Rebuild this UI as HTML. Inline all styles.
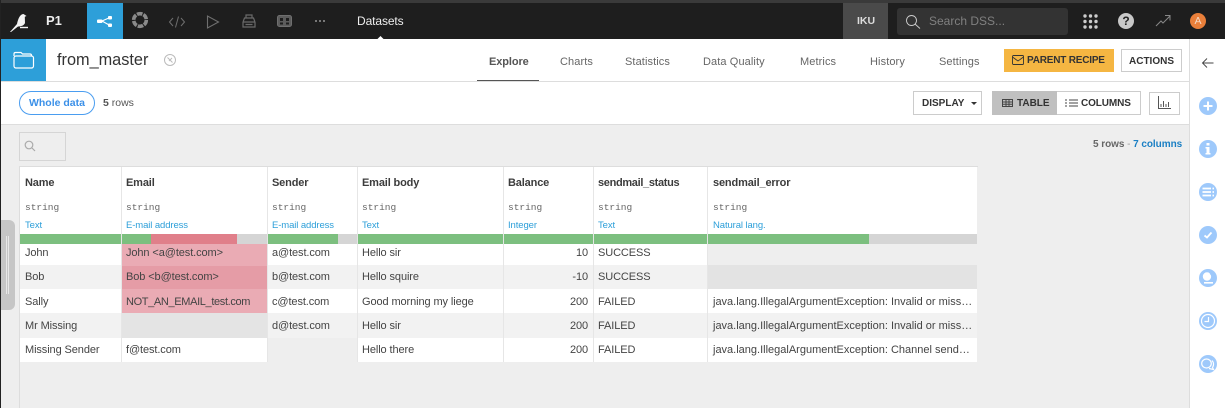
<!DOCTYPE html>
<html><head><meta charset="utf-8">
<style>
html,body{margin:0;padding:0;width:1225px;height:408px;overflow:hidden;background:#fff;font-family:"Liberation Sans",sans-serif;color:#333}
.a{position:absolute;white-space:nowrap}
svg{position:absolute;overflow:visible}
.t{font-size:11px;line-height:14px;letter-spacing:-.1px;color:#444}
.tab{font-size:11px;line-height:14px;top:55px;color:#666;letter-spacing:.1px}
.h{font-size:11px;font-weight:bold;top:177px;color:#3c3c3c;line-height:13px;letter-spacing:-.15px}
.m{font-family:"Liberation Mono",monospace;font-size:9.5px;top:202px;color:#666;line-height:12px}
.l{font-size:9.5px;top:220px;color:#2d9fd9;line-height:12px;letter-spacing:-.1px}
.btn{font-size:10px;font-weight:bold;color:#333;line-height:12px}
</style></head><body>
<div class="a" style="left:0;top:0;width:1225px;height:3px;background:#3a3a3a"></div>
<div class="a" style="left:0;top:3px;width:1225px;height:36px;background:#1e1e1e"></div>
<div class="a" style="left:0;top:0;width:1px;height:408px;background:#222"></div>
<svg style="left:9px;top:13px" width="20" height="20" viewBox="0 0 20 20"><path d="M1 19 L8 11 C9 6 11 1 14.500 1 L17.500 3 L15.800 3.800 L16 10 C15 12.500 12 13.500 9 13.500 L2 19Z" fill="#f4f4f4"/><rect x="11" y="13.800" width="8" height="1.400" fill="#f4f4f4"/></svg>
<div class="a" style="left:46px;top:13px;font-size:13px;font-weight:bold;color:#eee;line-height:15px">P1</div>
<div class="a" style="left:87px;top:3px;width:36px;height:36px;background:#2d9fd9"></div>
<svg style="left:97px;top:14px" width="16" height="16" viewBox="0 0 16 16"><path d="M5 7 L13 3.500 M5 7 L13 11.500" stroke="#fff" stroke-width="1.100" fill="none"/><rect x="0" y="5.500" width="5.500" height="3.500" rx="1" fill="#fff"/><rect x="11" y="2" width="4" height="3.500" rx="1" fill="#fff"/><rect x="11" y="9.500" width="4" height="3.500" rx="1" fill="#fff"/></svg>
<svg style="left:131px;top:12px" width="18" height="18" viewBox="0 0 18 18"><circle cx="9" cy="8" r="6.300" fill="none" stroke="#8a8a8a" stroke-width="3.600" stroke-dasharray="5.500 1.100"/></svg>
<svg style="left:169px;top:15px" width="16" height="14" viewBox="0 0 16 14" fill="none" stroke="#6f6f6f" stroke-width="1"><path d="M4 3 L0.500 7 L4 11 M12 3 L15.500 7 L12 11 M9.500 1.500 L6.500 12.500"/></svg>
<svg style="left:206px;top:14px" width="14" height="16" viewBox="0 0 14 16" fill="none" stroke="#6f6f6f" stroke-width="1.100"><path d="M1.500 2 L1.500 14 L12.500 8Z"/></svg>
<svg style="left:242px;top:13px" width="14" height="16" viewBox="0 0 14 16" fill="none" stroke="#6a6a6a" stroke-width="1.200"><path d="M4 5 V2 H10 V5 M1 9 L2.500 5 H11.500 L13 9 M1 9 H13 M1 9 V14 H13 V9 M3.500 11.500 H10.500" /></svg>
<svg style="left:277px;top:15px" width="15" height="13" viewBox="0 0 15 13"><rect x=".5" y=".5" width="14" height="11" rx="2" fill="#5c5c5c" stroke="#6f6f6f"/><rect x="3" y="3" width="3" height="3" fill="#1e1e1e"/><rect x="9" y="3" width="3" height="3" fill="#1e1e1e"/><rect x="3" y="7.500" width="3" height="2" fill="#1e1e1e"/><rect x="9" y="7.500" width="3" height="2" fill="#1e1e1e"/></svg>
<div class="a" style="left:315px;top:20px;width:2px;height:2px;background:#777;box-shadow:4px 0 #777,8px 0 #777"></div>
<div class="a" style="left:357px;top:14px;font-size:12px;color:#eee;line-height:14px;letter-spacing:-.1px">Datasets</div>
<div class="a" style="left:378px;top:37px;width:5px;height:5px;background:#fff;transform:rotate(45deg)"></div>

<div class="a" style="left:843px;top:3px;width:45px;height:36px;background:#4a4a4a"></div>
<div class="a" style="left:857px;top:15px;font-size:10.500px;font-weight:bold;color:#ddd;line-height:13px">IKU</div>
<div class="a" style="left:897px;top:8px;width:171px;height:27px;background:#333;border-radius:3px"></div>
<svg style="left:905px;top:14px" width="16" height="16" viewBox="0 0 16 16" fill="none" stroke="#ccc" stroke-width=".9"><circle cx="6.500" cy="6.500" r="5"/><path d="M10 10 L15 14.500"/></svg>
<div class="a" style="left:929px;top:14px;font-size:12px;color:#808080;line-height:14px">Search DSS...</div>
<svg style="left:1083px;top:14px" width="15" height="15" viewBox="0 0 15 15" fill="#ccc"><circle cx="2" cy="2" r="1.700"/><circle cx="7.500" cy="2" r="1.700"/><circle cx="13" cy="2" r="1.700"/><circle cx="2" cy="7.500" r="1.700"/><circle cx="7.500" cy="7.500" r="1.700"/><circle cx="13" cy="7.500" r="1.700"/><circle cx="2" cy="13" r="1.700"/><circle cx="7.500" cy="13" r="1.700"/><circle cx="13" cy="13" r="1.700"/></svg>
<div class="a" style="left:1118px;top:13px;width:16px;height:16px;border-radius:50%;background:#c8c8c8;color:#222;font-size:12px;font-weight:bold;line-height:16px;text-align:center">?</div>
<svg style="left:1155px;top:14px" width="16" height="14" viewBox="0 0 16 14" fill="none" stroke="#888" stroke-width="1"><path d="M1 12 L6 7 L8 9 L15 2 M10 1.500 H15 V6.500"/></svg>
<div class="a" style="left:1190px;top:13px;width:16px;height:16px;border-radius:50%;background:#e97f3a;color:#f6d9c4;font-size:10.500px;line-height:16px;text-align:center">A</div>

<div class="a" style="left:1px;top:39px;width:45px;height:42px;background:#2d9fd9"></div>
<svg style="left:13px;top:51px" width="22" height="18" viewBox="0 0 22 18" fill="none" stroke="#fff" stroke-width="1.200"><path d="M1 5 V3 C1 2 1.500 1.500 2.500 1.500 H8 L9.500 3 H17 C18 3 18.500 3.500 18.500 4.500"/><rect x="1" y="5" width="19.500" height="12" rx="2"/></svg>
<div class="a" style="left:57px;top:51px;font-size:16.300px;line-height:19px;color:#333">from_master</div>
<svg style="left:164px;top:54px" width="12" height="12" viewBox="0 0 12 12" fill="none" stroke="#bbb" stroke-width="1"><circle cx="6" cy="6" r="5.500"/><path d="M3.500 3.500 L8.500 8.500 M5 7 L8 4"/></svg>

<div class="a tab" style="left:489px;font-weight:bold;color:#555;letter-spacing:-.1px">Explore</div>
<div class="a" style="left:477px;top:80px;width:62px;height:1px;background:#555"></div>
<div class="a tab" style="left:560px">Charts</div>
<div class="a tab" style="left:625px">Statistics</div>
<div class="a tab" style="left:703px">Data Quality</div>
<div class="a tab" style="left:800px">Metrics</div>
<div class="a tab" style="left:870px">History</div>
<div class="a tab" style="left:939px">Settings</div>

<div class="a" style="left:1004px;top:49px;width:110px;height:23px;background:#f5b642"></div>
<svg style="left:1012px;top:55px" width="12" height="10" viewBox="0 0 12 10" fill="none" stroke="#333" stroke-width=".9"><rect x=".5" y=".5" width="11" height="9" rx="1"/><path d="M.5 2 L6 6 L11.500 2"/></svg>
<div class="a btn" style="left:1027px;top:55px;letter-spacing:-.2px">PARENT RECIPE</div>
<div class="a" style="left:1121px;top:49px;width:59px;height:21px;border:1px solid #ccc"></div>
<div class="a btn" style="left:1129px;top:56px">ACTIONS</div>

<div class="a" style="left:1px;top:81px;width:1188px;height:1px;background:#ddd"></div>
<div class="a" style="left:1189px;top:39px;width:1px;height:369px;background:#ddd"></div>
<svg style="left:1202px;top:58px" width="12" height="10" viewBox="0 0 12 10" fill="none" stroke="#444" stroke-width=".9"><path d="M11.500 5 H.5 M5 .5 L.5 5 L5 9.500"/></svg>

<div class="a" style="left:19px;top:91px;width:74px;height:22px;border:1px solid #4a9df0;border-radius:12px;color:#3b90e8;font-size:10.500px;font-weight:bold;line-height:22px;text-align:center">Whole data</div>
<div class="a" style="left:103px;top:97px;font-size:10.500px;color:#555;line-height:13px"><b>5</b> rows</div>

<div class="a" style="left:913px;top:91px;width:67px;height:22px;border:1px solid #ccc"></div>
<div class="a btn" style="left:922px;top:98px">DISPLAY</div>
<div class="a" style="left:971px;top:102px;border-left:3px solid transparent;border-right:3px solid transparent;border-top:3px solid #333"></div>
<div class="a" style="left:992px;top:91px;width:147px;height:22px;border:1px solid #ccc"></div>
<div class="a" style="left:992px;top:91px;width:65px;height:24px;background:#c0c0c0"></div>
<svg style="left:1002px;top:99px" width="11" height="8" viewBox="0 0 11 8" fill="none" stroke="#444" stroke-width="1"><rect x=".5" y=".5" width="10" height="7"/><path d="M.5 3 H10.500 M.5 5.300 H10.500 M4 .5 V7.500 M7 .5 V7.500"/></svg>
<div class="a btn" style="left:1017px;top:98px">TABLE</div>
<svg style="left:1065px;top:99px" width="13" height="8" viewBox="0 0 13 8" stroke="#444" stroke-width="1"><path d="M0 1 H2 M4 1 H13 M0 4 H2 M4 4 H13 M0 7 H2 M4 7 H13"/></svg>
<div class="a btn" style="left:1081px;top:98px;letter-spacing:-.1px">COLUMNS</div>
<div class="a" style="left:1149px;top:92px;width:29px;height:21px;border:1px solid #ccc"></div>
<svg style="left:1158px;top:96px" width="13" height="13" viewBox="0 0 13 13" stroke="#555" stroke-width="1" fill="none"><path d="M.5 0 V12.500 H13 M3 8 V11 M5.500 5 V11 M8 8 V11 M10.500 6 V11"/></svg>

<div class="a" style="left:1px;top:124px;width:1188px;height:284px;background:#eee"></div>
<div class="a" style="left:1px;top:124px;width:1188px;height:1px;background:#ddd"></div>
<div class="a" style="left:19px;top:132px;width:45px;height:27px;border:1px solid #d5d5d5"></div>
<svg style="left:24px;top:140px" width="12" height="12" viewBox="0 0 12 12" fill="none" stroke="#aaa" stroke-width="1.200"><circle cx="5" cy="5" r="3.800"/><path d="M8 8 L11 11"/></svg>
<div class="a" style="left:1093px;top:139px;font-size:10px;line-height:12px;font-weight:bold;color:#666;letter-spacing:-.05px">5 rows <span style="color:#999;font-weight:normal">-</span> <span style="color:#1a7fc4">7 columns</span></div>

<div class="a" style="left:1px;top:220px;width:14px;height:90px;background:#c6c6c6;border-radius:0 6px 6px 0"></div>
<div class="a" style="left:6px;top:236px;width:1px;height:58px;background:#e8e8e8;box-shadow:2px 0 #e8e8e8"></div>

<!-- table -->
<div class="a" style="left:19px;top:166px;width:959px;height:1px;background:#ddd"></div>
<div class="a" style="left:19px;top:166px;width:1px;height:242px;background:#ddd"></div>
<div class="a" style="left:20px;top:167px;width:957px;height:67px;background:#fff"></div>
<div class="a" style="left:20px;top:244px;width:957px;height:118px;background:#fff"></div>
<div class="a" style="left:20px;top:265px;width:957px;height:24px;background:#f2f2f2"></div>
<div class="a" style="left:20px;top:313px;width:957px;height:25px;background:#f2f2f2"></div>
<!-- bars -->
<div class="a" style="left:20px;top:234px;width:957px;height:10px;background:#7cbf7f"></div>
<div class="a" style="left:151px;top:234px;width:86px;height:10px;background:#e07f8a"></div>
<div class="a" style="left:237px;top:234px;width:30px;height:10px;background:#d5d5d5"></div>
<div class="a" style="left:338px;top:234px;width:19px;height:10px;background:#d5d5d5"></div>
<div class="a" style="left:869px;top:234px;width:108px;height:10px;background:#d5d5d5"></div>
<!-- cells -->
<div class="a" style="left:122px;top:244px;width:145px;height:69px;background:#eaabb4"></div>
<div class="a" style="left:122px;top:266px;width:145px;height:23px;background:#e59ca6"></div>
<div class="a" style="left:122px;top:313px;width:145px;height:25px;background:#e4e4e4"></div>
<div class="a" style="left:268px;top:338px;width:89px;height:24px;background:#eee"></div>
<div class="a" style="left:708px;top:244px;width:269px;height:21px;background:#eee"></div>
<div class="a" style="left:708px;top:265px;width:269px;height:24px;background:#e3e3e3"></div>
<!-- dividers -->
<div class="a" style="left:121px;top:167px;width:1px;height:195px;background:#e6e6e6"></div>
<div class="a" style="left:267px;top:167px;width:1px;height:195px;background:#e6e6e6"></div>
<div class="a" style="left:357px;top:167px;width:1px;height:195px;background:#e6e6e6"></div>
<div class="a" style="left:503px;top:167px;width:1px;height:195px;background:#e6e6e6"></div>
<div class="a" style="left:593px;top:167px;width:1px;height:195px;background:#e6e6e6"></div>
<div class="a" style="left:707px;top:167px;width:1px;height:195px;background:#e6e6e6"></div>

<div class="a h" style="left:25px">Name</div>
<div class="a h" style="left:126px">Email</div>
<div class="a h" style="left:272px">Sender</div>
<div class="a h" style="left:362px">Email body</div>
<div class="a h" style="left:508px">Balance</div>
<div class="a h" style="left:598px;letter-spacing:-.33px">sendmail_status</div>
<div class="a h" style="left:713px">sendmail_error</div>

<div class="a m" style="left:25px">string</div>
<div class="a m" style="left:126px">string</div>
<div class="a m" style="left:272px">string</div>
<div class="a m" style="left:362px">string</div>
<div class="a m" style="left:508px">string</div>
<div class="a m" style="left:598px">string</div>
<div class="a m" style="left:713px">string</div>

<div class="a l" style="left:25px">Text</div>
<div class="a l" style="left:126px">E-mail address</div>
<div class="a l" style="left:272px">E-mail address</div>
<div class="a l" style="left:362px">Text</div>
<div class="a l" style="left:508px">Integer</div>
<div class="a l" style="left:598px">Text</div>
<div class="a l" style="left:713px">Natural lang.</div>

<div class="a t" style="left:25px;top:246px">John</div>
<div class="a t" style="left:25px;top:270px">Bob</div>
<div class="a t" style="left:25px;top:295px">Sally</div>
<div class="a t" style="left:25px;top:319px">Mr Missing</div>
<div class="a t" style="left:25px;top:343px">Missing Sender</div>

<div class="a t" style="left:126px;top:246px">John &lt;a@test.com&gt;</div>
<div class="a t" style="left:126px;top:270px">Bob &lt;b@test.com&gt;</div>
<div class="a t" style="left:126px;top:295px;letter-spacing:-.35px">NOT_AN_EMAIL_test.com</div>
<div class="a t" style="left:126px;top:343px">f@test.com</div>

<div class="a t" style="left:272px;top:246px">a@test.com</div>
<div class="a t" style="left:272px;top:270px">b@test.com</div>
<div class="a t" style="left:272px;top:295px">c@test.com</div>
<div class="a t" style="left:272px;top:319px">d@test.com</div>

<div class="a t" style="left:362px;top:246px">Hello sir</div>
<div class="a t" style="left:362px;top:270px">Hello squire</div>
<div class="a t" style="left:362px;top:295px">Good morning my liege</div>
<div class="a t" style="left:362px;top:319px">Hello sir</div>
<div class="a t" style="left:362px;top:343px">Hello there</div>

<div class="a t" style="right:637px;top:246px">10</div>
<div class="a t" style="right:637px;top:270px">-10</div>
<div class="a t" style="right:637px;top:295px">200</div>
<div class="a t" style="right:637px;top:319px">200</div>
<div class="a t" style="right:637px;top:343px">200</div>

<div class="a t" style="left:598px;top:246px">SUCCESS</div>
<div class="a t" style="left:598px;top:270px">SUCCESS</div>
<div class="a t" style="left:598px;top:295px">FAILED</div>
<div class="a t" style="left:598px;top:319px">FAILED</div>
<div class="a t" style="left:598px;top:343px">FAILED</div>

<div class="a t" style="left:713px;top:295px;letter-spacing:0">java.lang.IllegalArgumentException: Invalid or miss…</div>
<div class="a t" style="left:713px;top:319px;letter-spacing:0">java.lang.IllegalArgumentException: Invalid or miss…</div>
<div class="a t" style="left:713px;top:343px;letter-spacing:0">java.lang.IllegalArgumentException: Channel send…</div>

<!-- right sidebar icons -->
<svg style="left:1199px;top:97px" width="18" height="18" viewBox="0 0 18 18"><circle cx="9" cy="9" r="9" fill="#9ec9fb"/><path d="M9 4.500 V13.500 M4.500 9 H13.500" stroke="#fff" stroke-width="2"/></svg>
<svg style="left:1199px;top:140px" width="18" height="18" viewBox="0 0 18 18"><circle cx="9" cy="9" r="9" fill="#9ec9fb"/><rect x="7.500" y="3" width="3" height="2.500" fill="#fff"/><path d="M6.500 7 H10.500 V13 H11.500 V14.500 H6.500 V13 H7.500 V8.500 H6.500Z" fill="#fff"/></svg>
<svg style="left:1199px;top:183px" width="18" height="18" viewBox="0 0 18 18"><circle cx="9" cy="9" r="9" fill="#9ec9fb"/><path d="M3.500 5.500 H12 M3.500 9 H12 M3.500 12.500 H12 M13.500 5.500 H15 M13.500 9 H15 M13.500 12.500 H15" stroke="#fff" stroke-width="1.800"/></svg>
<svg style="left:1199px;top:226px" width="18" height="18" viewBox="0 0 18 18"><circle cx="9" cy="9" r="9" fill="#9ec9fb"/><path d="M5.500 9.500 L8 11.500 L12.500 6.500" stroke="#fff" stroke-width="1.800" fill="none"/></svg>
<svg style="left:1199px;top:269px" width="18" height="18" viewBox="0 0 18 18"><circle cx="9" cy="9" r="9" fill="#9ec9fb"/><circle cx="8" cy="7.500" r="4.200" fill="#fff"/><path d="M11 4.500 A4.500 4.500 0 0 1 12.500 10" stroke="#9ec9fb" fill="none"/><rect x="5" y="13" width="9" height="1.600" fill="#fff"/></svg>
<svg style="left:1199px;top:312px" width="18" height="18" viewBox="0 0 18 18"><circle cx="9" cy="9" r="9" fill="#9ec9fb"/><circle cx="9" cy="9" r="6.500" fill="none" stroke="#fff" stroke-width="1.200"/><path d="M9.500 5 V9.500 H5.500" fill="none" stroke="#fff" stroke-width="1.200"/></svg>
<svg style="left:1199px;top:355px" width="18" height="18" viewBox="0 0 18 18"><circle cx="9" cy="9" r="9" fill="#9ec9fb"/><ellipse cx="7.500" cy="8.500" rx="4.800" ry="4.500" fill="none" stroke="#fff" stroke-width="1.200"/><path d="M13 5.500 C15 7.500 15 10.500 13.500 12.500 L14.500 14.500 L10 13.500" fill="none" stroke="#fff" stroke-width="1.200"/></svg>
</body></html>
